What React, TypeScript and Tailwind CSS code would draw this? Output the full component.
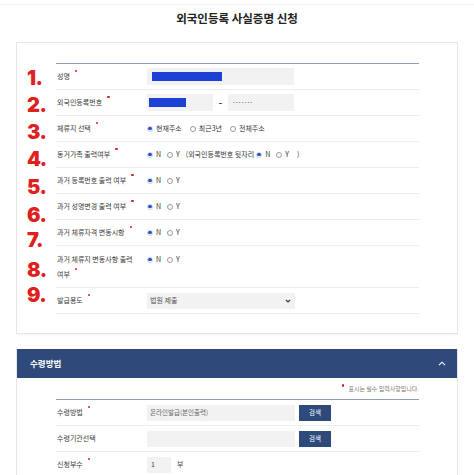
import React from "react";

const Req = () => (
  <span className="ml-[5px] mb-[11px] inline-block h-[2.5px] w-[2.5px] shrink-0 rounded-full bg-[#cc2222]" />
);

const Radio = ({ on, label }: { on?: boolean; label: string }) => (
  <span className="mr-[6px] flex items-center">
    {on ? (
      <span className="mr-[3px] flex h-[6px] w-[6px] items-center justify-center rounded-full border border-[#c6d0ea] bg-white">
        <span className="h-[3.5px] w-[3.5px] rounded-full bg-[#2752c9]" />
      </span>
    ) : (
      <span className="mr-[3px] inline-block h-[6px] w-[6px] rounded-full border border-[#9a9a9a] bg-white" />
    )}
    <span>{label}</span>
  </span>
);

const Num = ({ n, cls }: { n: string; cls: string }) => (
  <div className={"w-[39px] pl-[10px] flex items-center " + cls}>
    <span className="font-['Inter','Liberation_Sans',sans-serif] text-[20px] font-black leading-none tracking-[-0.5px] text-[#e0201b]">
      {n}
    </span>
  </div>
);

const Label = ({ text, req = true }: { text: string; req?: boolean }) => (
  <div className="flex w-[91px] shrink-0 items-center pl-[1px] text-[#3a3a3a]">
    <span>{text}</span>
    {req && <Req />}
  </div>
);

const Row = ({
  n,
  ncls,
  children,
  h = "h-[26px]",
}: {
  n?: string;
  ncls?: string;
  children: React.ReactNode;
  h?: string;
}) => (
  <div className="flex">
    {n ? <Num n={n} cls={ncls || ""} /> : <div className="w-[39px]" />}
    <div className={"flex w-[363px] items-center border-b border-[#ededed] " + h}>{children}</div>
  </div>
);

export default function App() {
  return (
    <div className="h-[475px] w-[474px] overflow-hidden bg-white font-['Noto_Sans_CJK_KR','Noto_Sans',sans-serif] text-[7px] text-[#333]">
      <div className="h-[5px] border-b border-[#f0f0f0]" />
      <h1 className="mt-[5px] text-center text-[11.5px] font-bold leading-[16px] text-[#222]">
        외국인등록 사실증명 신청
      </h1>

      {/* Card 1 */}
      <div className="mx-[16px] mt-[16px] border border-[#e6e6e6] pb-[19px] pt-[20px] shadow-[0_1px_1px_rgba(0,0,0,0.04)]">
        <div className="ml-[39px] w-[363px] border-t border-[#8d9fb5]" />

        <Row n="1." ncls="translate-y-[1px]">
          <Label text="성명" />
          <div className="flex h-[17px] w-[147px] items-center bg-[#f2f2f2] pl-[5px]">
            <div className="h-[9px] w-[70px] bg-[#1d41d4]" />
          </div>
        </Row>

        <Row n="2." ncls="translate-y-[2px]">
          <Label text="외국인등록번호" />
          <div className="flex h-[17px] w-[66px] items-center bg-[#f2f2f2] pl-[2px]">
            <div className="h-[9px] w-[37px] bg-[#1d41d4]" />
          </div>
          <div className="w-[15px] text-center text-[9px] font-bold text-[#333]">-</div>
          <div className="flex h-[17px] w-[66px] items-center bg-[#f2f2f2] pl-[4px] text-[7px] tracking-[-1px] text-[#444]">
            ·······
          </div>
        </Row>

        <Row n="3." ncls="translate-y-[3px]">
          <Label text="체류지 선택" />
          <div className="flex items-center">
            <span className="mr-[2px]"><Radio on label="현재주소" /></span>
            <span className="mr-[2px]"><Radio label="최근3년" /></span>
            <Radio label="전체주소" />
          </div>
        </Row>

        <Row n="4." ncls="translate-y-[4px]">
          <Label text="동거가족 출력여부" />
          <div className="flex items-center">
            <Radio on label="N" />
            <Radio label="Y" />
            <span className="mr-[2px]">(외국인등록번호 뒷자리</span>
            <Radio on label="N" />
            <Radio label="Y" />
            <span className="ml-[2px]">)</span>
          </div>
        </Row>

        <Row n="5." ncls="translate-y-[6px]">
          <Label text="과거 등록번호 출력 여부" />
          <div className="flex items-center">
            <Radio on label="N" />
            <Radio label="Y" />
          </div>
        </Row>

        <Row n="6." ncls="translate-y-[8px]">
          <Label text="과거 성명변경 출력 여부" />
          <div className="flex items-center">
            <Radio on label="N" />
            <Radio label="Y" />
          </div>
        </Row>

        <Row n="7." ncls="translate-y-[7px]">
          <Label text="과거 체류자격 변동시항" />
          <div className="flex items-center">
            <Radio on label="N" />
            <Radio label="Y" />
          </div>
        </Row>

        <Row n="8." ncls="translate-y-[3px]" h="h-[42px]">
          <div className="flex h-full w-full items-start pt-[6px] leading-[15px]">
            <div className="w-[91px] shrink-0 pl-[1px] text-[#3a3a3a]">
              <div>과거 체류지 변동사항 출력</div>
              <div className="flex items-center">
                <span>여부</span>
                <Req />
              </div>
            </div>
            <div className="flex items-center">
              <Radio on label="N" />
              <Radio label="Y" />
            </div>
          </div>
        </Row>

        <Row n="9." ncls="-translate-y-[6px]">
          <Label text="발급용도" />
          <div className="flex h-[16px] w-[148px] items-center justify-between bg-[#f2f2f2] pl-[3px] pr-[4px] text-[#555]">
            <span>법원 제출</span>
            <svg width="6" height="4" viewBox="0 0 6 4">
              <path d="M0.8 0.8 L3 3 L5.2 0.8" fill="none" stroke="#333" strokeWidth="1.2" />
            </svg>
          </div>
        </Row>
      </div>

      {/* Card 2 */}
      <div className="mx-[16px] mt-[15px] border-x border-[#e6e6e6]">
        <div className="flex h-[29px] items-center justify-between bg-[#2e4a7b] pl-[13px] pr-[11px]">
          <span className="text-[8.5px] font-bold text-white">수령방법</span>
          <svg width="8" height="5" viewBox="0 0 8 5">
            <path d="M1 4.2 L4 1.2 L7 4.2" fill="none" stroke="#ffffff" strokeWidth="1.1" />
          </svg>
        </div>

        <div className="flex">
          <div className="w-[39px]" />
          <div className="w-[363px]">
            <div className="flex h-[21px] items-center justify-end text-[6px] text-[#777]">
              <span className="mb-[6px] mr-[4px] inline-block h-[2.5px] w-[2.5px] rounded-full bg-[#cc2222]" />
              <span>표시는 필수 입력사항입니다.</span>
            </div>
            <div className="border-t border-[#8d9fb5]" />
          </div>
        </div>

        <Row>
          <Label text="수령방법" />
          <div className="flex h-[16px] w-[148px] items-center bg-[#f2f2f2] pl-[3px] text-[6.5px] text-[#666]">
            온라인발급(본인출력)
          </div>
          <div className="ml-[4px] flex h-[16px] w-[32px] items-center justify-center bg-[#2e4a7b] text-[6.5px] text-white">
            검색
          </div>
        </Row>

        <Row>
          <Label text="수령기관선택" req={false} />
          <div className="h-[16px] w-[148px] bg-[#f2f2f2]" />
          <div className="ml-[4px] flex h-[16px] w-[32px] items-center justify-center bg-[#2e4a7b] text-[6.5px] text-white">
            검색
          </div>
        </Row>

        <Row>
          <Label text="신청부수" />
          <div className="flex h-[16px] w-[24px] items-center bg-[#f2f2f2] pl-[4px] text-[#444]">1</div>
          <span className="ml-[6px] text-[#444]">부</span>
        </Row>
      </div>
    </div>
  );
}
